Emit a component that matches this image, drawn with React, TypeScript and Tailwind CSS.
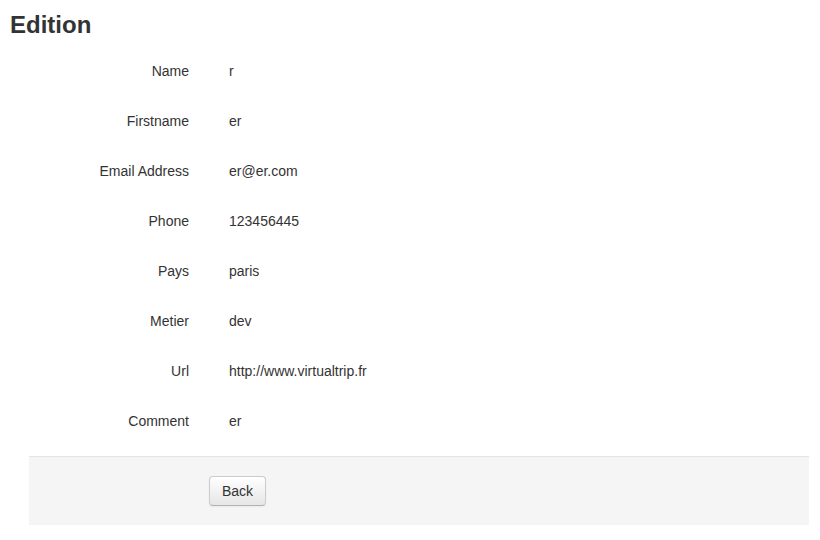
import React from 'react';

const fields: [string, string][] = [
  ['Name', 'r'],
  ['Firstname', 'er'],
  ['Email Address', 'er@er.com'],
  ['Phone', '123456445'],
  ['Pays', 'paris'],
  ['Metier', 'dev'],
  ['Url', 'http://www.virtualtrip.fr'],
  ['Comment', 'er'],
];

export default function App() {
  return (
    <div className="min-h-screen bg-white text-[#333333] font-['Liberation_Sans',Arial,sans-serif] text-[14px] leading-[20px]">
      <h1 className="pt-[10px] pl-[10px] text-[24px] leading-[30px] font-bold">Edition</h1>

      <div className="mt-[6px]">
        {fields.map(([label, value]) => (
          <div key={label} className="flex items-center h-[50px]">
            <div className="w-[189px] text-right">{label}</div>
            <div className="pl-[40px]">{value}</div>
          </div>
        ))}
      </div>

      {/* Form actions */}
      <div className="mt-[10px] ml-[29px] w-[780px] bg-[#f5f5f5] border-t border-[#e5e5e5] pt-[19px] pb-[19px] pl-[180px]">
        <button
          type="button"
          className="h-[30px] px-[12px] rounded-[4px] border border-[#cccccc] border-b-[#b3b3b3] bg-gradient-to-b from-white to-[#e6e6e6] shadow-[inset_0_1px_0_rgba(255,255,255,0.2),0_1px_2px_rgba(0,0,0,0.05)] text-[#333333]"
        >
          Back
        </button>
      </div>
    </div>
  );
}
